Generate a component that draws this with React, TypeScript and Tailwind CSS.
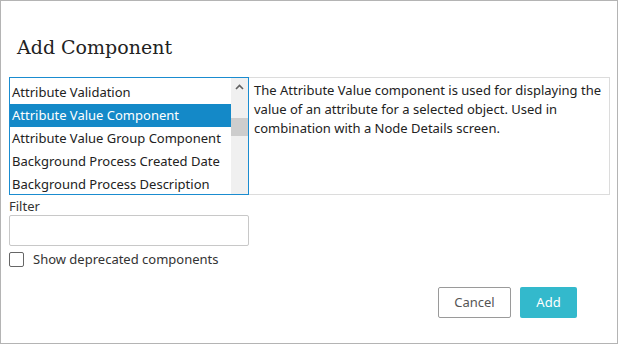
import React, { useState } from 'react';

const ITEMS = [
  'Attribute Validation',
  'Attribute Value Component',
  'Attribute Value Group Component',
  'Background Process Created Date',
  'Background Process Description',
];

const App: React.FC = () => {
  const [selected, setSelected] = useState('Attribute Value Component');
  const [filter, setFilter] = useState('');
  const [showDeprecated, setShowDeprecated] = useState(false);

  return (
    <div
      className="w-[618px] h-[344px] bg-white border border-[#b4b4b4] text-[#222] flex flex-col"
      style={{ fontFamily: '"Noto Sans", sans-serif' }}
    >
      {/* Title */}
      <h1
        className="text-[19px] text-[#222] pl-[16px] pt-[33px] leading-[26px]"
        style={{ fontFamily: '"DejaVu Serif", serif' }}
      >
        Add Component
      </h1>

      {/* List + description */}
      <div className="flex pl-[8px] mt-[17px]">
        <div className="w-[240px] h-[118px] border border-[#1a8cd0] flex overflow-hidden">
          <div className="flex-1 pt-[3px] text-[13px]">
            {ITEMS.map((item) => (
              <div
                key={item}
                onClick={() => setSelected(item)}
                className={`h-[23px] leading-[23px] pl-[2px] whitespace-nowrap cursor-default ${
                  selected === item ? 'bg-[#1489c8] text-white' : 'text-[#222]'
                }`}
              >
                {item}
              </div>
            ))}
          </div>
          {/* scrollbar */}
          <div className="w-[17px] bg-[#f0f0f0] flex flex-col">
            <div className="h-[17px] flex items-center justify-center">
              <svg width="9" height="6" viewBox="0 0 9 6">
                <path d="M1 5 L4.5 1.5 L8 5" fill="none" stroke="#606060" strokeWidth="1.6" />
              </svg>
            </div>
            <div className="h-[23px]" />
            <div className="h-[18px] bg-[#cdcdcd]" />
          </div>
        </div>
        <div className="w-[361px] h-[118px] border border-l-0 border-[#dcdcdc] pl-[5px] pr-[4px] pt-[3px] text-[13px] leading-[19px] text-[#222]">
          The Attribute Value component is used for displaying the value of an attribute for a
          selected object. Used in combination with a Node Details screen.
        </div>
      </div>

      {/* Filter */}
      <div className="pl-[8px] mt-[2px] flex flex-col">
        <label className="text-[13px] leading-[18px] text-[#333]">Filter</label>
        <input
          value={filter}
          onChange={(e) => setFilter(e.target.value)}
          className="w-[240px] h-[31px] border border-[#c8c8c8] rounded-[2px] outline-none px-2 text-[13px]"
        />
        <label className="flex items-center gap-[9px] mt-[4px] text-[13px] leading-[18px] text-[#333] cursor-default">
          <span
            onClick={() => setShowDeprecated(!showDeprecated)}
            className="w-[15px] h-[15px] border-[1.5px] border-[#666] rounded-[2px] flex items-center justify-center"
          >
            {showDeprecated && (
              <svg width="10" height="8" viewBox="0 0 10 8">
                <path d="M1 4 L4 7 L9 1" fill="none" stroke="#333" strokeWidth="1.5" />
              </svg>
            )}
          </span>
          Show deprecated components
        </label>
      </div>

      {/* Buttons */}
      <div className="flex justify-end gap-[9px] pr-[40px] mt-[19px]">
        <button className="w-[73px] h-[31px] border border-[#9a9a9a] rounded-[2px] text-[13px] text-[#555] bg-white">
          Cancel
        </button>
        <button className="w-[57px] h-[31px] rounded-[2px] text-[13px] text-white bg-[#33b9cc]">
          Add
        </button>
      </div>
    </div>
  );
};

export default App;
